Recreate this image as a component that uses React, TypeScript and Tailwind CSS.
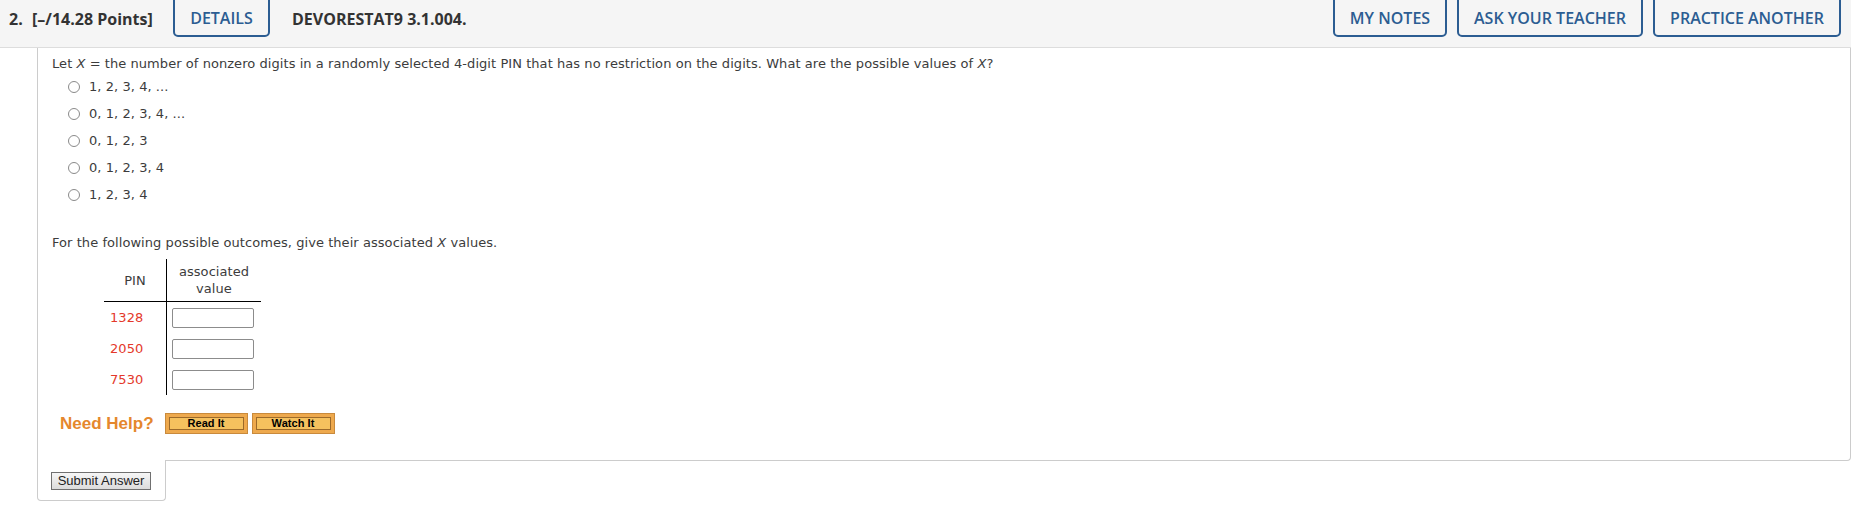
const headerFont = { fontFamily: '"Open Sans", "Noto Sans", sans-serif' }
const bodyFont = { fontFamily: '"DejaVu Sans", Verdana, sans-serif' }
const arial = { fontFamily: '"Liberation Sans", Arial, sans-serif' }

const options = ['1, 2, 3, 4, ...', '0, 1, 2, 3, 4, ...', '0, 1, 2, 3', '0, 1, 2, 3, 4', '1, 2, 3, 4']
const pins = ['1328', '2050', '7530']

function HeaderButton({ label, w }: { label: string; w: string }) {
  return (
    <button
      className={`${w} h-[45px] -mt-[8px] shrink-0 rounded-[5px] border-2 border-[#2c5d92] text-[16px] font-semibold text-[#2c5d92] bg-transparent flex items-center justify-center pt-[7px]`}
      style={headerFont}
    >
      {label}
    </button>
  )
}

function HelpButton({ label }: { label: string }) {
  return (
    <button className="w-[83px] h-[21px] border border-[#c98a3c] bg-[#eea94d] p-[3px] flex">
      <span
        className="flex-1 h-[13px] border border-[#9c6a2a] bg-[#f5c15e] text-[11px] leading-[11px] font-bold text-black flex items-center justify-center"
        style={arial}
      >
        {label}
      </span>
    </button>
  )
}

export default function App() {
  return (
    <div className="w-[1859px] h-[505px] bg-white overflow-hidden">
      <header
        className="w-[1851px] h-[48px] bg-[#f5f5f5] border-b border-[#dddddd] flex items-start pl-[9px] pr-[10px] text-[#333] overflow-hidden"
        style={headerFont}
      >
        <span className="w-[23px] text-[16px] font-bold mt-[7px]">2.</span>
        <span className="w-[120px] text-[16px] font-bold mt-[7px] whitespace-nowrap">[–/14.28 Points]</span>
        <div className="ml-[21px]">
          <HeaderButton label="DETAILS" w="w-[97px]" />
        </div>
        <span className="text-[16px] font-bold mt-[7px] ml-[22px]">DEVORESTAT9 3.1.004.</span>
        <div className="ml-auto flex gap-[10px]">
          <HeaderButton label="MY NOTES" w="w-[114px]" />
          <HeaderButton label="ASK YOUR TEACHER" w="w-[186px]" />
          <HeaderButton label="PRACTICE ANOTHER" w="w-[188px]" />
        </div>
      </header>

      <div
        className="ml-[37px] w-[1814px] h-[413px] border-x border-b border-[#cccccc] rounded-br-[4px] pl-[14px] pt-[8px] text-[13px] text-[#3c3c3c] tracking-[0.06px]"
        style={bodyFont}
      >
        <p className="leading-[16px]">
          Let <i>X</i> = the number of nonzero digits in a randomly selected 4-digit PIN that has no restriction on the
          digits. What are the possible values of <i>X</i>?
        </p>
        <ul className="mt-[1px]">
          {options.map((o) => (
            <li key={o} className="h-[27px] flex items-center pl-[16px]">
              <span className="w-[12px] h-[12px] rounded-full border border-[#8a8a8a] bg-white shrink-0" />
              <span className="ml-[9px]">{o}</span>
            </li>
          ))}
        </ul>

        <p className="leading-[16px] mt-[27px]">
          For the following possible outcomes, give their associated <i>X</i> values.
        </p>

        <div className="flex ml-[52px] mt-[8px]">
          <div className="w-[63px] border-r border-black">
            <div className="h-[43px] border-b border-black flex items-center justify-center pt-[1px]">PIN</div>
            {pins.map((p) => (
              <div key={p} className="h-[31px] flex items-center pl-[6px] text-[#e4392b]">
                {p}
              </div>
            ))}
          </div>
          <div className="w-[94px]">
            <div className="h-[43px] border-b border-black flex flex-col items-center justify-center leading-[17px]">
              <span>associated</span>
              <span>value</span>
            </div>
            {pins.map((p) => (
              <div key={p} className="h-[31px] flex items-center pl-[5px]">
                <input
                  type="text"
                  className="w-[82px] h-[20px] border border-[#8c8c8c] rounded-[2px] bg-white outline-none"
                />
              </div>
            ))}
          </div>
        </div>

        <div className="flex items-center mt-[18px] ml-[8px]">
          <span className="text-[17px] font-bold text-[#e5872d] leading-[21px] tracking-normal" style={arial}>
            Need Help?
          </span>
          <div className="ml-[11px] flex gap-[4px]">
            <HelpButton label="Read It" />
            <HelpButton label="Watch It" />
          </div>
        </div>
      </div>

      <div className="ml-[37px] -mt-px relative w-[129px] h-[41px] bg-white border-x border-b border-[#cccccc] rounded-b-[4px] pl-[13px] pt-[12px]">
        <button
          className="w-[100px] h-[18px] border border-[#707070] bg-gradient-to-b from-[#f6f6f6] to-[#dcdcdc] text-[13px] leading-[16px] text-[#222] flex items-center justify-center"
          style={arial}
        >
          Submit Answer
        </button>
      </div>
    </div>
  )
}
